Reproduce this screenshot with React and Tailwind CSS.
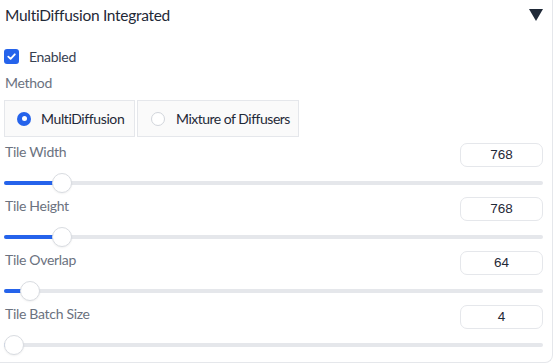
import React from "react";

const sans = { fontFamily: "Lato, 'Liberation Sans', sans-serif" };

function SliderRow({ label, value, thumb }) {
  return (
    <div className="flex flex-col">
      <div className="flex justify-between items-start h-[24px]">
        <span className="text-[14px] leading-[18px] tracking-[-0.3px] text-[#6b7280] pl-[1px]">{label}</span>
        <div className="w-[83px] h-[24px] rounded-[7px] border border-[#e5e7eb] bg-white flex items-center justify-center text-[13.5px] text-[#1f2937]" style={{ fontFamily: "'Liberation Sans', Arial, sans-serif" }}>
          {value}
        </div>
      </div>
      <div className="relative h-[20px] mt-[6px] mb-[4px] flex items-center">
        <div className="w-full h-[4px] rounded-full bg-[#e5e7eb]" />
        <div className="absolute left-0 top-[8px] h-[4px] rounded-full bg-[#2563eb]" style={{ width: thumb - 4 }} />
        <div className="absolute top-0 w-[20px] h-[20px] rounded-full bg-white border border-[#d9dce1] shadow-[0_1px_2px_rgba(0,0,0,0.06)]" style={{ left: thumb - 14 }} />
      </div>
    </div>
  );
}

export default function App() {
  return (
    <div className="w-[559px] h-[364px] bg-white" style={sans}>
      <div className="w-[553px] h-[363px] border-r border-b border-[#e5e7eb] rounded-br-[8px] pl-[4px] pr-[9px]">
        <div className="flex items-center justify-between h-[32px] pl-[1px]">
          <span className="text-[15.5px] tracking-[-0.3px] text-[#1f2937]">MultiDiffusion Integrated</span>
          <svg width="14" height="12" viewBox="0 0 14 12" className="mt-[-2px]">
            <path d="M0 0 H14 L7 12 Z" fill="#1f2937" />
          </svg>
        </div>
        <div className="flex items-center h-[16px] mt-[16px]">
          <div className="w-[15px] h-[15px] rounded-[3px] bg-[#2563eb] flex items-center justify-center">
            <svg width="11" height="11" viewBox="0 0 12 12">
              <path d="M2.5 6.2 L5 8.6 L9.6 3.6" stroke="white" strokeWidth="2" fill="none" strokeLinecap="round" strokeLinejoin="round" />
            </svg>
          </div>
          <span className="ml-[10px] text-[14px] tracking-[-0.3px] text-[#374151]">Enabled</span>
        </div>
        <div className="h-[18px] mt-[10px] text-[14px] leading-[18px] tracking-[-0.3px] text-[#6b7280] pl-[1px]">Method</div>
        <div className="flex mt-[8px] gap-[2px]">
          <div className="h-[37px] w-[131px] border border-[#e5e7eb] bg-[#fafafa] flex items-center pl-[12px] whitespace-nowrap">
            <div className="w-[14px] h-[14px] rounded-full bg-[#2563eb] flex items-center justify-center shrink-0">
              <div className="w-[5px] h-[5px] rounded-full bg-white" />
            </div>
            <span className="ml-[10px] text-[14px] tracking-[-0.4px] text-[#1f2937]">MultiDiffusion</span>
          </div>
          <div className="h-[37px] w-[162px] border border-[#e5e7eb] bg-[#fafafa] flex items-center pl-[13px] whitespace-nowrap">
            <div className="w-[14px] h-[14px] rounded-full bg-white border border-[#d1d5db] shrink-0" />
            <span className="ml-[11px] text-[14px] tracking-[-0.5px] text-[#1f2937]">Mixture of Diffusers</span>
          </div>
        </div>
        <div className="mt-[6px]">
          <SliderRow label="Tile Width" value="768" thumb={62} />
          <SliderRow label="Tile Height" value="768" thumb={62} />
          <SliderRow label="Tile Overlap" value="64" thumb={30} />
          <SliderRow label="Tile Batch Size" value="4" thumb={14} />
        </div>
      </div>
    </div>
  );
}
